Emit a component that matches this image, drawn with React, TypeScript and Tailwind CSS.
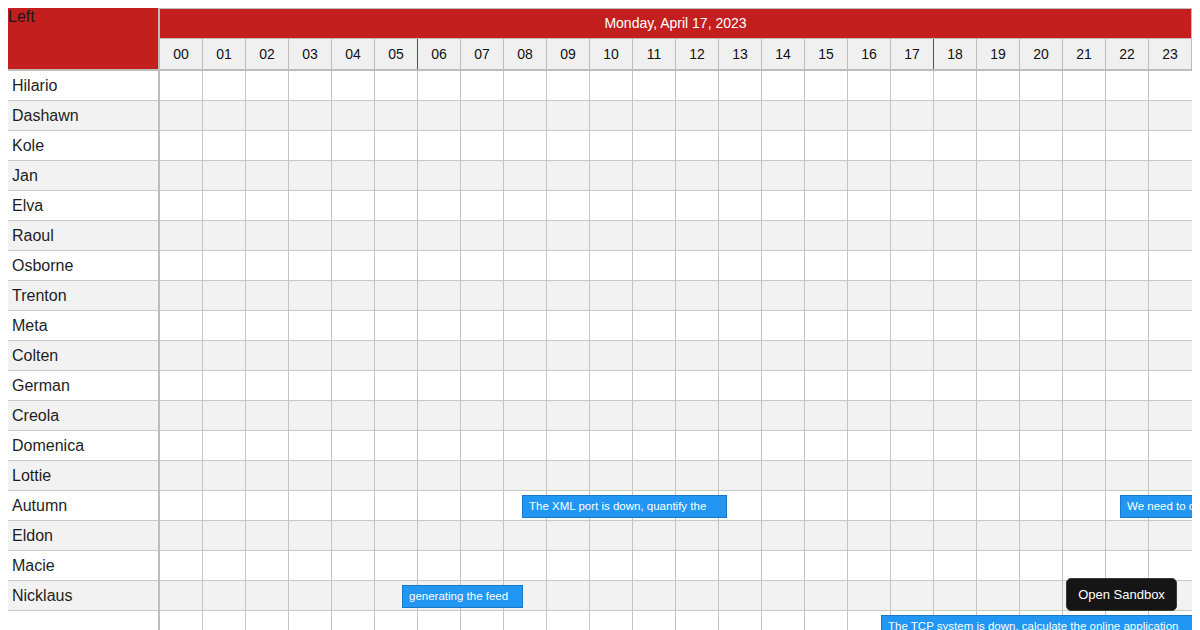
import React from "react";

const names = [
  "Hilario", "Dashawn", "Kole", "Jan", "Elva", "Raoul", "Osborne", "Trenton", "Meta",
  "Colten", "German", "Creola", "Domenica", "Lottie", "Autumn", "Eldon", "Macie", "Nicklaus", "",
];

const hours = Array.from({ length: 24 }, (_, i) => String(i).padStart(2, "0"));

const events = [
  { row: 14, left: 362, width: 205, text: "The XML port is down, quantify the" },
  { row: 14, left: 960, width: 220, text: "We need to compress the digital feed" },
  { row: 17, left: 242, width: 121, text: "generating the feed" },
  { row: 18, left: 721, width: 420, text: "The TCP system is down, calculate the online application" },
];

export default function App() {
  return (
    <div className="h-[630px] w-[1200px] overflow-hidden bg-white" style={{ fontFamily: '"Liberation Sans", Arial, sans-serif' }}>
      <div className="m-2 flex">
        {/* Left column */}
        <div className="w-[150px] shrink-0">
          <div className="h-[63px] border-b-2 border-[#bdbdbd] bg-[#c41f1f] text-[16px] leading-[1.15] text-[#1a1a1a]">
            Left
          </div>
          {names.map((n, i) => (
            <div
              key={i}
              className={`flex h-[30px] items-center border-b border-[#c8c8c8] px-1 text-[16px] text-[#1e1e1e] ${i % 2 === 1 ? "bg-[#f2f2f2]" : "bg-white"}`}
            >
              {n}
            </div>
          ))}
        </div>

        {/* Timeline */}
        <div className="w-[1034px] shrink-0 overflow-hidden border-l-2 border-[#bdbdbd]">
          <div className="border-t border-b-2 border-[#bdbdbd]">
            <div className="flex h-[29px] items-center justify-center border-r border-[#bdbdbd] bg-[#c41f1f] text-[14px] text-white">
              Monday, April 17, 2023
            </div>
            <div className="flex h-[31px] border-t border-[#bdbdbd]">
              {hours.map((h, i) => (
                <div
                  key={h}
                  className={`flex h-full w-[43px] shrink-0 items-center justify-center border-r bg-[#f0f0f0] text-[14px] text-[#111] ${i === 5 || i === 17 ? "border-[#c41f1f]" : "border-[#bdbdbd]"}`}
                >
                  {h}
                </div>
              ))}
            </div>
          </div>

          <div className="relative">
            {names.map((_, r) => (
              <div
                key={r}
                className={`flex h-[30px] border-b border-[#c8c8c8] ${r % 2 === 1 ? "bg-[#f2f2f2]" : "bg-white"}`}
              >
                {hours.map((h, i) => (
                  <div
                    key={h}
                    className={`h-full w-[43px] shrink-0 ${i < 23 ? "border-r border-[#c4c4c4]" : ""}`}
                  />
                ))}
              </div>
            ))}
            {events.map((e, i) => (
              <div
                key={i}
                className="absolute flex h-[23px] items-center overflow-hidden whitespace-nowrap border border-[#1a78c8] bg-[#2196f3] pl-[6px] text-[11.5px] text-white"
                style={{ top: e.row * 30 + 4, left: e.left, width: e.width }}
              >
                {e.text}
              </div>
            ))}
          </div>
        </div>
      </div>

      <button className="fixed bottom-[19px] right-[23px] flex h-[33px] w-[111px] items-center justify-center rounded-[5px] border border-[#3a3a3a] bg-[#151515] text-[13px] text-white">
        Open Sandbox
      </button>
    </div>
  );
}
